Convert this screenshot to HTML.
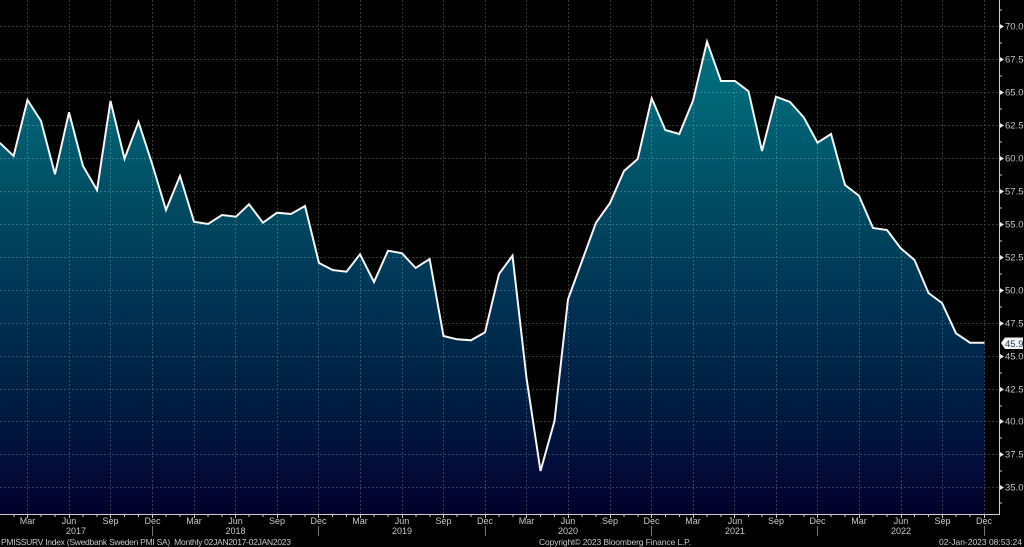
<!DOCTYPE html>
<html>
<head>
<meta charset="utf-8">
<style>
html,body{margin:0;padding:0;background:#000;width:1024px;height:547px;overflow:hidden}
svg{display:block;filter:blur(0.3px)}
text{font-family:"Liberation Sans",sans-serif;fill:#c8c8c8}
.a{font-size:9.5px}
.m{font-size:9px;text-anchor:middle}
.c{font-size:8.5px}
</style>
</head>
<body>
<svg width="1024" height="547" viewBox="0 0 1024 547" xmlns="http://www.w3.org/2000/svg">
<defs>
<linearGradient id="g" gradientUnits="userSpaceOnUse" x1="0" y1="40" x2="0" y2="514">
<stop offset="0" stop-color="#00717f"/>
<stop offset="0.127" stop-color="#006676"/>
<stop offset="0.338" stop-color="#004c62"/>
<stop offset="0.549" stop-color="#003354"/>
<stop offset="0.675" stop-color="#002648"/>
<stop offset="0.802" stop-color="#00183f"/>
<stop offset="0.907" stop-color="#030c38"/>
<stop offset="1" stop-color="#00002a"/>
</linearGradient>
</defs>
<path fill="url(#g)" d="M-0.3 142.7L13.6 156L27.5 100L41 121L55 174.3L69 112.3L83 166L97 190L110.5 101L124.5 158.7L138.5 122L152.5 165L166 210L180 176L194 221.7L208 224L222 215L236 216.7L249 204.3L263 222.7L277 212.7L291 214L305 206L319 263L332.6 270L346.5 271.7L360 254.3L374 282L388 250.7L402 253.3L415.7 268L429.6 259L443.5 336L457 339.3L471 340.3L485 332.3L499 274L512.5 255.7L526.5 378L540.5 471L554.5 421L568 299.3L582 261L596 222.7L610 203L624 171L637.7 159L651.7 98.3L665.3 130L679.3 134L693 100.7L707 41.7L721 81L735 81L748.5 91.3L762 151L776 96.7L790 102L803.7 117.3L817.5 142.7L831 134L845 185L859 195.7L873 228L887 230L900.5 248L914.5 260L928.5 293L942 303L956 333.3L970 342.7L984.5 342.7L984.5 514L-0.3 514Z"/>
<path stroke="#fff" stroke-opacity="0.22" stroke-width="1" stroke-dasharray="2 2" fill="none" d="M0 26.5H999M0 59.5H999M0 92.5H999M0 125.5H999M0 158.5H999M0 191.5H999M0 224.5H999M0 257.5H999M0 290.5H999M0 323.5H999M0 356.5H999M0 389.5H999M0 421.5H999M0 454.5H999M0 487.5H999M27.5 0V514M69.5 0V514M110.5 0V514M152.5 0V514M194.5 0V514M235.5 0V514M277.5 0V514M318.5 0V514M360.5 0V514M402.5 0V514M443.5 0V514M485.5 0V514M526.5 0V514M568.5 0V514M610.5 0V514M651.5 0V514M693.5 0V514M734.5 0V514M776.5 0V514M817.5 0V514M859.5 0V514M901.5 0V514M942.5 0V514M984.5 0V514"/>
<path fill="none" stroke="#f6f6f6" stroke-width="2" stroke-linejoin="miter" d="M-0.3 142.7L13.6 156L27.5 100L41 121L55 174.3L69 112.3L83 166L97 190L110.5 101L124.5 158.7L138.5 122L152.5 165L166 210L180 176L194 221.7L208 224L222 215L236 216.7L249 204.3L263 222.7L277 212.7L291 214L305 206L319 263L332.6 270L346.5 271.7L360 254.3L374 282L388 250.7L402 253.3L415.7 268L429.6 259L443.5 336L457 339.3L471 340.3L485 332.3L499 274L512.5 255.7L526.5 378L540.5 471L554.5 421L568 299.3L582 261L596 222.7L610 203L624 171L637.7 159L651.7 98.3L665.3 130L679.3 134L693 100.7L707 41.7L721 81L735 81L748.5 91.3L762 151L776 96.7L790 102L803.7 117.3L817.5 142.7L831 134L845 185L859 195.7L873 228L887 230L900.5 248L914.5 260L928.5 293L942 303L956 333.3L970 342.7L984.5 342.7"/>
<path stroke="#cfcfcf" stroke-width="1" fill="none" d="M999.5 0V514.5H0"/>
<path stroke="#c8c8c8" stroke-width="1" fill="none" d="M999 10H1002M999 43H1002M999 76H1002M999 109H1002M999 142H1002M999 175H1002M999 208H1002M999 241H1002M999 274H1002M999 307H1002M999 373H1002M999 406H1002M999 438H1002M999 471H1002M999 503H1002M14 514V517M27.5 514V518M41 514V517M55 514V517M69.5 514V518M83 514V517M97 514V517M110.5 514V518M124.5 514V517M138.5 514V517M152.5 514V518M166 514V517M180 514V517M194.5 514V518M208 514V517M222 514V517M235.5 514V518M249 514V517M263 514V517M277.5 514V518M291 514V517M305 514V517M318.5 514V518M332.5 514V517M346.5 514V517M360.5 514V518M374 514V517M388 514V517M402.5 514V518M416 514V517M430 514V517M443.5 514V518M457 514V517M471 514V517M485.5 514V518M499 514V517M513 514V517M526.5 514V518M540.5 514V517M554.5 514V517M568.5 514V518M582 514V517M596 514V517M610.5 514V518M624 514V517M638 514V517M651.5 514V518M665.5 514V517M679.5 514V517M693.5 514V518M707 514V517M721 514V517M734.5 514V518M748.5 514V517M762 514V517M776.5 514V518M790 514V517M804 514V517M817.5 514V518M831 514V517M845 514V517M859.5 514V518M873 514V517M887 514V517M901.5 514V518M914.5 514V517M928.5 514V517M942.5 514V518M956 514V517M970 514V517M984.5 514V518"/>
<path stroke="#777" stroke-width="1" fill="none" d="M152.5 526V536M318.5 526V536M485.5 526V536M651.5 526V536M817.5 526V536M984.5 526V536"/>
<path fill="#e8e8e8" d="M1000 24L1004 26.5L1000 29ZM1000 57L1004 59.5L1000 62ZM1000 90L1004 92.5L1000 95ZM1000 123L1004 125.5L1000 128ZM1000 156L1004 158.5L1000 161ZM1000 189L1004 191.5L1000 194ZM1000 222L1004 224.5L1000 227ZM1000 255L1004 257.5L1000 260ZM1000 288L1004 290.5L1000 293ZM1000 321L1004 323.5L1000 326ZM1000 354L1004 356.5L1000 359ZM1000 387L1004 389.5L1000 392ZM1000 419L1004 421.5L1000 424ZM1000 452L1004 454.5L1000 457ZM1000 485L1004 487.5L1000 490Z"/>
<text class="a" x="1005" y="29.5">70.0</text>
<text class="a" x="1005" y="62.5">67.5</text>
<text class="a" x="1005" y="95.5">65.0</text>
<text class="a" x="1005" y="128.5">62.5</text>
<text class="a" x="1005" y="161.5">60.0</text>
<text class="a" x="1005" y="194.5">57.5</text>
<text class="a" x="1005" y="227.5">55.0</text>
<text class="a" x="1005" y="260.5">52.5</text>
<text class="a" x="1005" y="293.5">50.0</text>
<text class="a" x="1005" y="326.5">47.5</text>
<text class="a" x="1005" y="359.5">45.0</text>
<text class="a" x="1005" y="392.5">42.5</text>
<text class="a" x="1005" y="424.5">40.0</text>
<text class="a" x="1005" y="457.5">37.5</text>
<text class="a" x="1005" y="490.5">35.0</text>
<path fill="#f4f4f4" d="M1001 343L1005 337.5H1023V349H1005Z"/>
<text class="a" x="1005" y="347" style="fill:#1c3a4e">45.9</text>
<text class="m" x="27.5" y="524">Mar</text><text class="m" x="69" y="524">Jun</text><text class="m" x="110.5" y="524">Sep</text><text class="m" x="152.5" y="524">Dec</text>
<text class="m" x="194" y="524">Mar</text><text class="m" x="235.5" y="524">Jun</text><text class="m" x="277" y="524">Sep</text><text class="m" x="318.5" y="524">Dec</text>
<text class="m" x="360" y="524">Mar</text><text class="m" x="402" y="524">Jun</text><text class="m" x="443.5" y="524">Sep</text><text class="m" x="485" y="524">Dec</text>
<text class="m" x="526.5" y="524">Mar</text><text class="m" x="568" y="524">Jun</text><text class="m" x="610" y="524">Sep</text><text class="m" x="651.5" y="524">Dec</text>
<text class="m" x="693" y="524">Mar</text><text class="m" x="735" y="524">Jun</text><text class="m" x="776" y="524">Sep</text><text class="m" x="817.5" y="524">Dec</text>
<text class="m" x="859" y="524">Mar</text><text class="m" x="901" y="524">Jun</text><text class="m" x="942.5" y="524">Sep</text><text class="m" x="984" y="524">Dec</text>
<text class="m" x="76" y="534">2017</text><text class="m" x="235.5" y="534">2018</text><text class="m" x="402" y="534">2019</text><text class="m" x="568" y="534">2020</text><text class="m" x="735" y="534">2021</text><text class="m" x="901" y="534">2022</text>
<text class="c" x="1" y="545" textLength="290" lengthAdjust="spacing" xml:space="preserve">PMISSURV Index (Swedbank Sweden PMI SA)  Monthly 02JAN2017-02JAN2023</text>
<text class="c" x="539" y="545" textLength="152" lengthAdjust="spacing">Copyright© 2023 Bloomberg Finance L.P.</text>
<text class="c" x="939" y="545" textLength="83" lengthAdjust="spacing">02-Jan-2023 08:53:24</text>
</svg>
</body>
</html>
